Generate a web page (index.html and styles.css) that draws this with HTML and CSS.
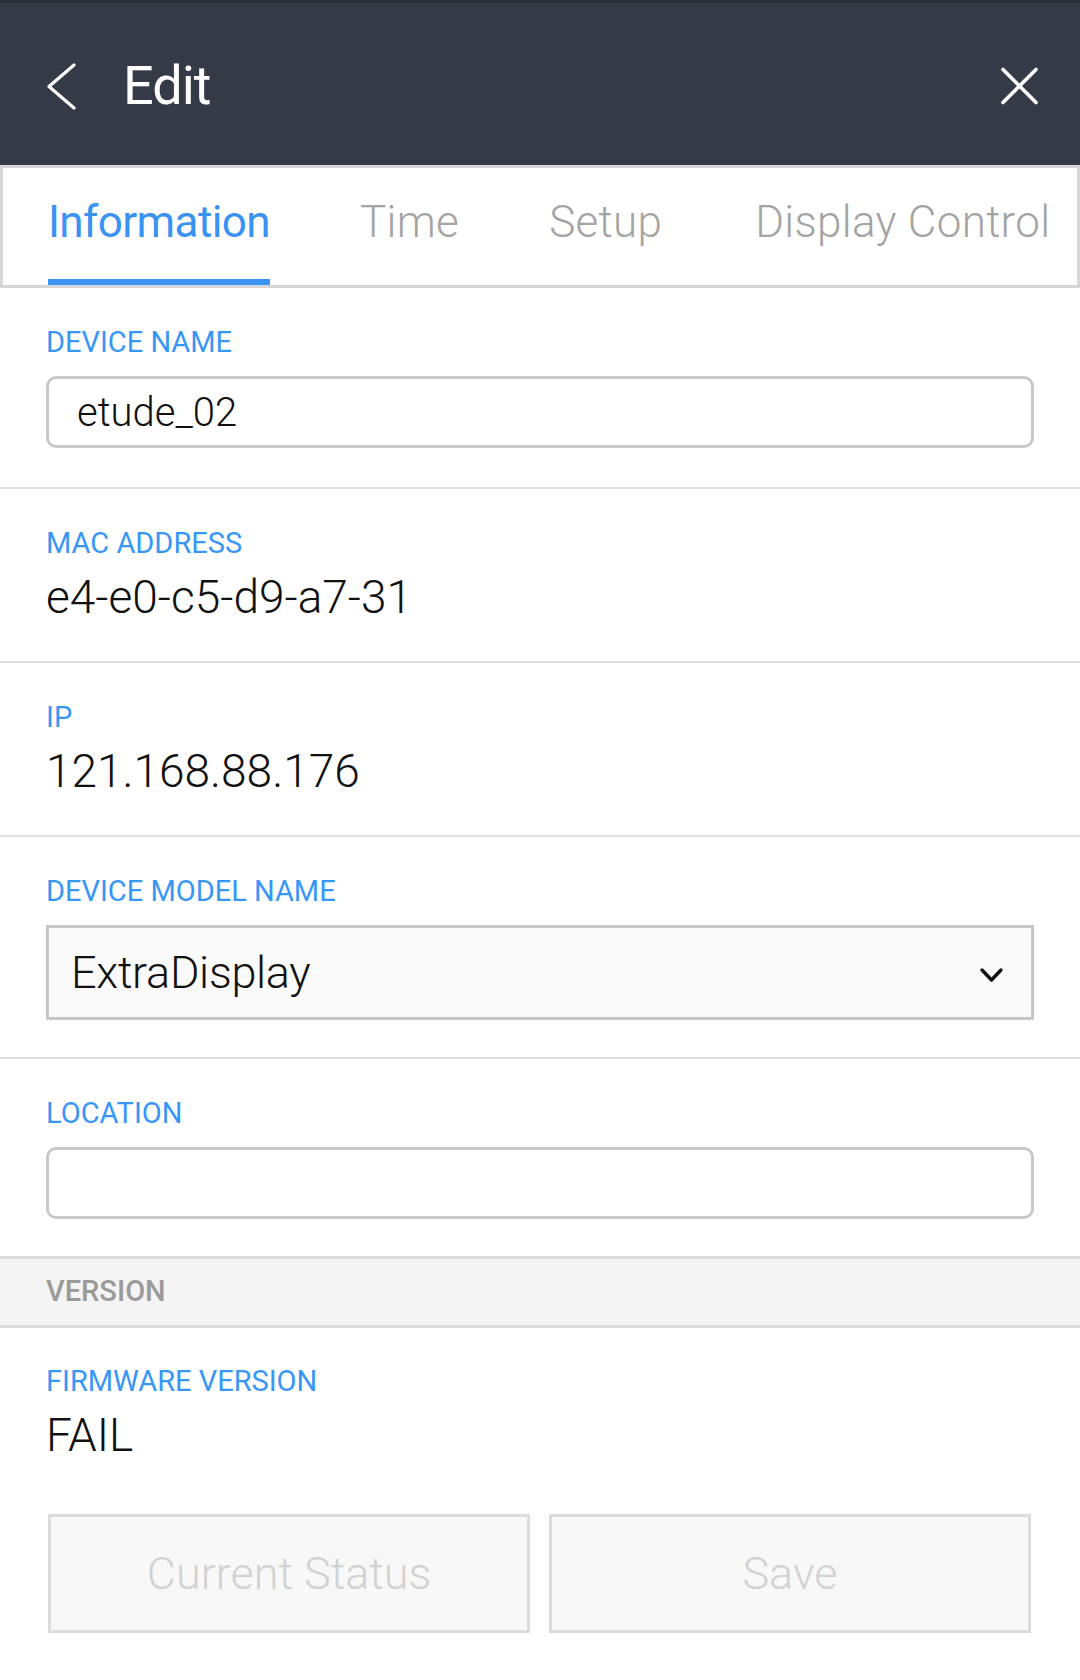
FILE: index.html
```html
<!DOCTYPE html>
<html lang="en">
<head>
<meta charset="utf-8">
<title>Edit</title>
<link rel="stylesheet" href="styles.css">
</head>
<body>
<header class="topbar">
  <button class="icon-btn back" aria-label="Back">
    <svg width="32" height="48" viewBox="0 0 32 48"><polyline points="28,3 3,24.5 28,46" fill="none" stroke="#fff" stroke-width="3.2" stroke-linecap="round" stroke-linejoin="round"/></svg>
  </button>
  <h1 class="title">Edit</h1>
  <button class="icon-btn close" aria-label="Close">
    <svg width="42" height="40" viewBox="0 0 42 40"><path d="M4 3.5 L37 36.5 M37 3.5 L4 36.5" fill="none" stroke="#fff" stroke-width="3.6" stroke-linecap="round"/></svg>
  </button>
</header>

<nav class="tabs">
  <a class="tab active">Information</a>
  <a class="tab">Time</a>
  <a class="tab">Setup</a>
  <a class="tab tab--wide">Display Control</a>
</nav>

<main class="content">
  <section class="field field--first">
    <label class="label">DEVICE NAME</label>
    <input class="text-input" type="text" value="etude_02">
  </section>

  <section class="field field--value">
    <div class="label">MAC ADDRESS</div>
    <div class="value">e4-e0-c5-d9-a7-31</div>
  </section>

  <section class="field field--value">
    <div class="label">IP</div>
    <div class="value">121.168.88.176</div>
  </section>

  <section class="field">
    <div class="label">DEVICE MODEL NAME</div>
    <div class="select">
      <span class="select-text">ExtraDisplay</span>
      <svg class="select-caret" width="26" height="18" viewBox="0 0 26 18"><polyline points="3,4 12.5,14 22,4" fill="none" stroke="#111" stroke-width="3.4" stroke-linecap="round" stroke-linejoin="round"/></svg>
    </div>
  </section>

  <section class="field field--last">
    <label class="label">LOCATION</label>
    <input class="text-input" type="text" value="">
  </section>

  <div class="group-header">VERSION</div>

  <section class="field field--value field--last field--firmware">
    <div class="label">FIRMWARE VERSION</div>
    <div class="value">FAIL</div>
  </section>

  <div class="actions">
    <button class="btn">Current Status</button>
    <button class="btn">Save</button>
  </div>
</main>
</body>
</html>
```

FILE: styles.css
```css
* {
  box-sizing: border-box;
}

html, body {
  margin: 0;
  padding: 0;
  background: #ffffff;
}

body {
  font-family: Roboto, "Noto Sans", "Liberation Sans", sans-serif;
  color: #111111;
  width: 1080px;
  min-height: 1680px;
}

/* ---------- Header ---------- */
.topbar {
  height: 165px;
  background: #353b46;
  border-top: 3px solid #2b3038;
  padding-top: 3px;
  display: flex;
  align-items: center;
}

.icon-btn {
  background: none;
  border: 0;
  padding: 0;
  margin: 0;
  display: flex;
  align-items: center;
  justify-content: center;
}

.back {
  margin-left: 46px;
}

.title {
  margin: 0 0 0 45px;
  font-size: 54px;
  line-height: 54px;
  font-weight: 400;
  color: #ffffff;
  letter-spacing: -1px;
  flex: 1;
}

.close {
  margin-right: 39px;
}

/* ---------- Tabs ---------- */
.tabs {
  display: flex;
  gap: 90px;
  border: 3px solid #d6d6d6;
  padding-left: 45px;
  background: #ffffff;
}

.tab {
  font-size: 44px;
  line-height: 52px;
  letter-spacing: 0.3px;
  font-weight: 300;
  color: #a4a4a4;
  padding-top: 28px;
  padding-bottom: 31px;
  border-bottom: 6px solid transparent;
  white-space: nowrap;
}

.tab--wide {
  margin-left: 3px;
}

.tab.active {
  color: #3a92f2;
  font-weight: 400;
  letter-spacing: -0.6px;
  border-bottom-color: #3b93f3;
}

/* ---------- Fields ---------- */
.field {
  padding: 37px 46px;
  border-bottom: 2px solid #e0e0e0;
}

.field--first {
  padding-bottom: 39px;
}

.field--last {
  border-bottom: 0;
}

.label {
  display: block;
  font-size: 29px;
  line-height: 34px;
  color: #3897f5;
  margin-bottom: 17px;
}

.field--value .label {
  margin-bottom: 10px;
}

.value {
  font-size: 46px;
  line-height: 54px;
  font-weight: 300;
  color: #111111;
}

.text-input {
  display: block;
  width: 100%;
  height: 72px;
  border: 3px solid #c8c8c8;
  border-radius: 10px;
  padding: 0 28px;
  font-family: Roboto, "Noto Sans", sans-serif;
  font-size: 40px;
  font-weight: 300;
  color: #111111;
  background: #ffffff;
  outline: none;
}

.select {
  height: 95px;
  border: 3px solid #c6c6c6;
  background: #fafafa;
  display: flex;
  align-items: center;
  justify-content: space-between;
  padding: 0 26px 0 22px;
}

.select-text {
  font-size: 45px;
  line-height: 54px;
  font-weight: 300;
  letter-spacing: -0.3px;
  color: #111111;
}

.select-caret {
  margin-top: 4px;
}

/* ---------- Group header ---------- */
.group-header {
  background: #f4f4f4;
  border-top: 3px solid #dcdcdc;
  border-bottom: 3px solid #dcdcdc;
  padding: 15px 46px 17px;
  font-size: 29px;
  line-height: 34px;
  font-weight: 500;
  color: #9a9a9a;
}

.field--firmware {
  padding-top: 36px;
  padding-bottom: 0;
}

/* ---------- Actions ---------- */
.actions {
  display: grid;
  grid-template-columns: 1fr 1fr;
  gap: 19px;
  padding: 0 49px 0 48px;
  margin-top: 52px;
}

.btn {
  height: 119px;
  border: 3px solid #dcdcdc;
  background: #f8f8f8;
  font-family: Roboto, "Noto Sans", sans-serif;
  font-size: 45px;
  font-weight: 300;
  color: #d2d2d2;
  padding: 0;
  margin: 0;
}
```
